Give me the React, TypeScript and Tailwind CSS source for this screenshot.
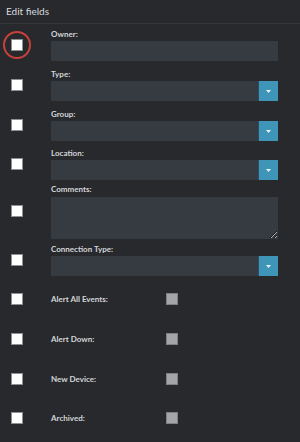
import React from 'react'

type Row =
  | { kind: 'input'; label: string; mt: string; select?: boolean }
  | { kind: 'textarea'; label: string; mt: string }
  | { kind: 'toggle'; label: string; mt: string }

const rows: Row[] = [
  { kind: 'input', label: 'Owner:', mt: 'mt-[4px]' },
  { kind: 'input', label: 'Type:', mt: 'mt-[7px]', select: true },
  { kind: 'input', label: 'Group:', mt: 'mt-[7px]', select: true },
  { kind: 'input', label: 'Location:', mt: 'mt-[6px]', select: true },
  { kind: 'textarea', label: 'Comments:', mt: 'mt-[3px]' },
  { kind: 'input', label: 'Connection Type:', mt: 'mt-[4px]', select: true },
  { kind: 'toggle', label: 'Alert All Events:', mt: 'mt-[13px]' },
  { kind: 'toggle', label: 'Alert Down:', mt: 'mt-[20px]' },
  { kind: 'toggle', label: 'New Device:', mt: 'mt-[20px]' },
  { kind: 'toggle', label: 'Archived:', mt: 'mt-[19px]' },
]

function Caret() {
  return (
    <div className="w-[20px] h-[20px] bg-[#3f95b8] border-l border-[#2b4f60] flex items-center justify-center shrink-0">
      <svg width="5" height="3" viewBox="0 0 5 3">
        <path d="M0 0 L5 0 L2.5 3 Z" fill="#e8f2f6" />
      </svg>
    </div>
  )
}

function Label({ text }: { text: string }) {
  return <div className="h-[12px] leading-[12px] text-[8px] font-bold text-[#d3d5d8] mb-[1px]">{text}</div>
}

export default function App() {
  return (
    <div className="w-[300px] h-[442px] bg-[#27292d] overflow-hidden" style={{ fontFamily: 'Lato, "Noto Sans", sans-serif' }}>
      <div className="h-[24px] border-b border-[#33363b] px-[6px] pt-[5px] text-[10px] leading-[13px] text-[#d8dadd]">
        Edit fields
      </div>

      {rows.map((row, i) => (
        <div key={row.label} className={`flex items-center ${row.mt}`}>
          <div className="w-[51px] shrink-0 flex">
            <div className="relative w-[34px] flex items-center justify-center">
              <div className="w-[12px] h-[12px] bg-white border border-[#8d8f92]" />
              {i === 0 && (
                <div className="absolute left-[3px] top-1/2 -translate-y-1/2 w-[28px] h-[28px] rounded-full border-2 border-[#c8403c]" />
              )}
            </div>
          </div>

          {row.kind === 'input' && (
            <div className="w-[227px]">
              <Label text={row.label} />
              <div className="h-[20px] bg-[#363a41] flex justify-end">
                {row.select && <Caret />}
              </div>
            </div>
          )}

          {row.kind === 'textarea' && (
            <div className="w-[227px]">
              <div className="h-[12px] leading-[12px] text-[8px] font-bold text-[#d3d5d8] mb-[2px]">{row.label}</div>
              <textarea className="block w-full h-[42px] bg-[#363a41] outline-none border-0" />
            </div>
          )}

          {row.kind === 'toggle' && (
            <div className="flex items-center h-[20px]">
              <div className="w-[115px] text-[8px] font-bold text-[#d3d5d8] leading-[12px]">{row.label}</div>
              <div className="w-[12px] h-[12px] bg-[#a3a5a8] border border-[#7d7f83]" />
            </div>
          )}
        </div>
      ))}
    </div>
  )
}
